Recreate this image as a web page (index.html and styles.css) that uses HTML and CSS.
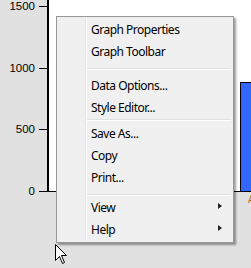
FILE: index.html
```html
<!DOCTYPE html>
<html>
<head>
<meta charset="utf-8">
<link rel="stylesheet" href="styles.css">
</head>
<body>
<div class="chart">
  <div class="yaxis">
    <span class="ylabel" style="top:-1px">1500</span>
    <span class="ylabel" style="top:61px">1000</span>
    <span class="ylabel" style="top:122px">500</span>
    <span class="ylabel" style="top:184px">0</span>
    <span class="tick" style="top:6px"></span>
    <span class="tick" style="top:68px"></span>
    <span class="tick" style="top:129px"></span>
    <span class="tick" style="top:191px"></span>
  </div>
  <div class="plot">
    <div class="bar" style="top:82px"></div>
  </div>
  <span class="xlabel">A</span>
</div>

<div class="menu">
  <div class="item">Graph Properties</div>
  <div class="item">Graph Toolbar</div>
  <div class="sep sep-tall"></div>
  <div class="item">Data Options...</div>
  <div class="item">Style Editor...</div>
  <div class="sep sep-short"></div>
  <div class="item">Save As...</div>
  <div class="item">Copy</div>
  <div class="item">Print...</div>
  <div class="sep"></div>
  <div class="item sub">View</div>
  <div class="item sub">Help</div>
</div>

<svg class="cursor" width="13" height="20" viewBox="0 0 13 20">
  <path d="M0.5 0.5 L0.5 16.5 L4.5 12.5 L7.5 19.5 L9.5 18.5 L6.5 11.5 L11.5 11.5 Z" fill="#fff" stroke="#000" stroke-width="1" stroke-linejoin="miter"/>
</svg>
</body>
</html>
```

FILE: styles.css
```css
html, body {
  margin: 0;
  padding: 0;
}
body {
  width: 251px;
  height: 268px;
  overflow: hidden;
  background: #e1e1e1;
  position: relative;
  font-family: "Liberation Sans", Arial, sans-serif;
}
.chart {
  position: relative;
  height: 268px;
  padding-left: 47px;
  overflow: hidden;
}
.yaxis {
  position: absolute;
  left: 0;
  top: 0;
  width: 47px;
  height: 200px;
}
.ylabel {
  position: absolute;
  right: 12px;
  font-size: 11.5px;
  line-height: 14px;
  color: #000;
  text-align: right;
}
.tick {
  position: absolute;
  left: 39px;
  width: 8px;
  height: 1px;
  background: #000;
}
.plot {
  position: relative;
  height: 192px;
  box-sizing: border-box;
  background: #fff;
  border-left: 2px solid #000;
  border-bottom: 1px solid #000;
}
.bar {
  position: absolute;
  left: 191px;
  bottom: 0;
  width: 30px;
  box-sizing: border-box;
  height: 109px;
  background: #3366ff;
  border: 1px solid #000;
  border-bottom: none;
}
.xlabel {
  position: absolute;
  left: 248px;
  top: 194px;
  font-size: 10px;
  color: #b86a00;
}
.menu {
  position: absolute;
  left: 56px;
  top: 16px;
  width: 178px;
  height: 227px;
  box-sizing: border-box;
  padding: 2px;
  background: #f0f0f0;
  border: 1px solid #979797;
  box-shadow: 2px 2px 2px 0 rgba(0, 0, 0, 0.38);
  font-family: "Noto Sans", sans-serif;
  font-size: 12px;
  letter-spacing: -0.5px;
  color: #000;
}
.menu::before {
  content: "";
  position: absolute;
  left: 28px;
  top: 1px;
  bottom: 1px;
  width: 1px;
  background: #e2e3e3;
  border-right: 1px solid #fff;
}
.item {
  position: relative;
  height: 22px;
  line-height: 22px;
  padding-left: 32px;
  white-space: nowrap;
}
.sub::after {
  content: "";
  position: absolute;
  right: 9px;
  top: 6px;
  width: 0;
  height: 0;
  border-left: 4px solid #222;
  border-top: 3.5px solid transparent;
  border-bottom: 3.5px solid transparent;
}
.sep {
  height: 8px;
  margin-left: 28px;
  box-sizing: border-box;
  padding-top: 5px;
}
.sep-tall {
  height: 12px;
  padding-top: 5px;
}
.sep-short {
  height: 4px;
  padding-top: 0;
}
.sep::before {
  content: "";
  display: block;
  height: 1px;
  background: #e0e0e0;
  border-bottom: 1px solid #fff;
}
.cursor {
  position: absolute;
  left: 55px;
  top: 244px;
}
```
